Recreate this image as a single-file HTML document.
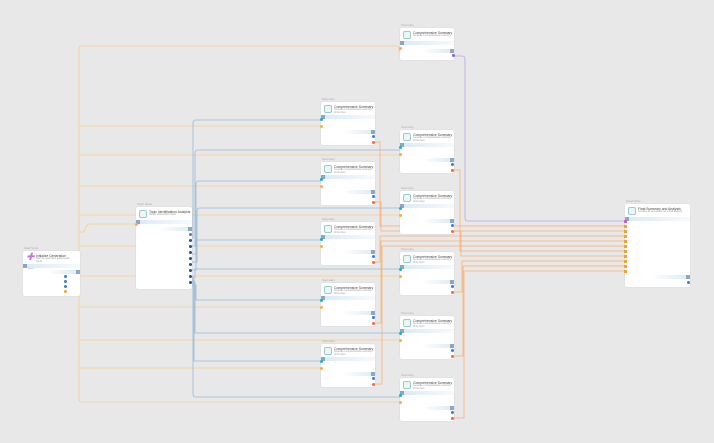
<!DOCTYPE html>
<html><head><meta charset="utf-8"><style>
*{margin:0;padding:0;box-sizing:border-box}
body{width:714px;height:443px;background:#e8e8e8;position:relative;overflow:hidden;font-family:"Liberation Sans",sans-serif}
svg{position:absolute;left:0;top:0}
.n{position:absolute;width:54px;height:43px;background:#fff;border-radius:2px;box-shadow:0 0 1px rgba(0,0,0,.15)}
.n .lb{position:absolute;left:1px;top:-5px;font-size:3px;color:#aaa;white-space:nowrap}
.n .ic{position:absolute;left:3px;top:3px;width:8px;height:8px;border:0.6px solid #9cc;border-radius:2px;background:#eef6f3}
.n b{position:absolute;left:13px;top:3px;font-size:3.4px;color:#444;font-weight:normal;white-space:nowrap}
.n p{position:absolute;left:13px;top:7px;width:38px;font-size:2.3px;line-height:2.6px;color:#999}
.n .in{position:absolute;left:0;top:13px;width:100%;height:4px;background:linear-gradient(90deg,#dbe9f5,#f6fafd)}
.n .in::before{content:"";position:absolute;left:0;top:0;width:4px;height:4px;background:#8aa8c4}
.n .out{position:absolute;right:0;height:4px;width:60%;background:linear-gradient(90deg,#fff,#dbe9f5)}
.n .out::after{content:"";position:absolute;right:0;top:0;width:4px;height:4px;background:#8aa8c4}
.d{position:absolute;width:3px;height:3px;border-radius:50%}
.t{position:absolute;font-size:2.2px;color:#aaa;white-space:nowrap}
</style></head><body>
<svg width="714" height="443" fill="none" stroke-width="0.8">
<g stroke="#f8cd8f">
<path d="M70 292 H76 Q79 292 79 288 V49 Q79 46 82 46 H396 Q399 46 399 49 V52 H400"/>
<path d="M79 280 V399 Q79 402 82 402 H400"/>
<path d="M79 126 H321"/><path d="M79 186 H321"/><path d="M79 246 H321"/><path d="M79 307 H321"/><path d="M79 368 H321"/>
<path d="M79 155 H400"/><path d="M79 215 H400"/><path d="M79 276 H400"/><path d="M79 340 H400"/>
<path d="M79 232 H84 Q86 224 90 224 H136"/>
</g>
<g stroke="#98b9d6">
<path d="M190 238 H193 V123 Q193 120 196 120 H321"/>
<path d="M190 246 H195 V153 Q195 150 198 150 H400"/>
<path d="M190 254 H196 V184 Q196 181 199 181 H321"/>
<path d="M190 262 H197 V211 Q197 208 200 208 H400"/>
<path d="M190 270 H196 V240 H321"/>
<path d="M190 278 H195 V269 H400"/>
<path d="M190 285 H196 V300 H321"/>
<path d="M190 282 H195 V333 H400"/>
<path d="M190 280 H194 V361 H321"/>
<path d="M190 276 H193 V394 Q193 397 196 397 H400"/>
</g>
<g stroke="#f5b077">
<path d="M375 142 H380 V226 H625"/>
<path d="M375 202 H381 V231 H625"/>
<path d="M375 262 H380 V236 H625"/>
<path d="M375 323 H381 V241 H625"/>
<path d="M375 384 H382 V246 H625"/>
<path d="M454 170 H460 V251 H625"/>
<path d="M454 231 H461 V256 H625"/>
<path d="M454 292 H462 V261 H625"/>
<path d="M454 356 H463 V266 H625"/>
<path d="M454 418 H464 V271 H625"/>
</g>
<path d="M455 56 H462 Q465 56 465 59 V218 Q465 221 468 221 H625" stroke="#bba3e6"/>
</svg>

<div class="n" style="left:23px;top:251px;width:57px;height:45px"><span class="lb">Start Node</span>
<i class="ic" style="border:none;background:none;color:#d070e0;font-size:10px;line-height:8px;text-align:center">✚</i><b>Initialize Generation</b><p>Start the generation process with inputs</p>
<s class="in"></s><span class="t" style="left:5px;top:17px">inputs</span>
<s class="out" style="top:19px"></s>
<u class="d" style="right:13px;top:24px;background:#3a7de0"></u><u class="d" style="right:13px;top:29px;background:#3a7de0"></u><u class="d" style="right:13px;top:34px;background:#3a7de0"></u><u class="d" style="right:13px;top:39px;background:#f5a030"></u></div>

<div class="n" style="left:136px;top:207px;width:56px;height:82px"><span class="lb">Topic Node</span>
<i class="ic"></i><b>Topic Identification Analysis</b><p>Identify and analyze topics</p>
<s class="in"></s><u class="d" style="left:-1px;top:16px;background:#f5b040"></u>
<s class="out" style="top:20px"></s>
<u class="d" style="right:0;top:26px;background:#3a7de0"></u>
<u class="d" style="right:0;top:32px;background:#1d4f9a"></u><u class="d" style="right:0;top:38px;background:#1d4f9a"></u><u class="d" style="right:0;top:44px;background:#1d4f9a"></u><u class="d" style="right:0;top:50px;background:#1d4f9a"></u><u class="d" style="right:0;top:56px;background:#1d4f9a"></u><u class="d" style="right:0;top:62px;background:#1d4f9a"></u><u class="d" style="right:0;top:68px;background:#1d4f9a"></u><u class="d" style="right:0;top:74px;background:#1d4f9a"></u></div>

<div class="n" style="left:400px;top:28px;height:32px"><span class="lb">Summary</span><i class="ic"></i><b>Comprehensive Summary</b><p>Generate a comprehensive summary</p><s class="in"></s><u class="d" style="left:-1px;top:19px;background:#f5b040"></u><s class="out" style="top:21px"></s><u class="d" style="right:-1px;top:26px;background:#8a5ee0"></u></div>

<div class="n" style="left:321px;top:102px"><span class="lb">Summary</span><i class="ic"></i><b>Comprehensive Summary</b><p>Generate a comprehensive summary of the input</p><s class="in"></s><u class="d" style="left:-1px;top:16px;background:#1ab0d8"></u><u class="d" style="left:-1px;top:23px;background:#f5b040"></u><s class="out" style="top:28px"></s><u class="d" style="right:0;top:33px;background:#3a7de0"></u><u class="d" style="right:0;top:39px;background:#ee6a40"></u></div>
<div class="n" style="left:321px;top:162px"><span class="lb">Summary</span><i class="ic"></i><b>Comprehensive Summary</b><p>Generate a comprehensive summary of the input</p><s class="in"></s><u class="d" style="left:-1px;top:16px;background:#1ab0d8"></u><u class="d" style="left:-1px;top:23px;background:#f5b040"></u><s class="out" style="top:28px"></s><u class="d" style="right:0;top:33px;background:#3a7de0"></u><u class="d" style="right:0;top:39px;background:#ee6a40"></u></div>
<div class="n" style="left:321px;top:222px"><span class="lb">Summary</span><i class="ic"></i><b>Comprehensive Summary</b><p>Generate a comprehensive summary of the input</p><s class="in"></s><u class="d" style="left:-1px;top:16px;background:#1ab0d8"></u><u class="d" style="left:-1px;top:23px;background:#f5b040"></u><s class="out" style="top:28px"></s><u class="d" style="right:0;top:33px;background:#3a7de0"></u><u class="d" style="right:0;top:39px;background:#ee6a40"></u></div>
<div class="n" style="left:321px;top:283px"><span class="lb">Summary</span><i class="ic"></i><b>Comprehensive Summary</b><p>Generate a comprehensive summary of the input</p><s class="in"></s><u class="d" style="left:-1px;top:16px;background:#1ab0d8"></u><u class="d" style="left:-1px;top:23px;background:#f5b040"></u><s class="out" style="top:28px"></s><u class="d" style="right:0;top:33px;background:#3a7de0"></u><u class="d" style="right:0;top:39px;background:#ee6a40"></u></div>
<div class="n" style="left:321px;top:344px"><span class="lb">Summary</span><i class="ic"></i><b>Comprehensive Summary</b><p>Generate a comprehensive summary of the input</p><s class="in"></s><u class="d" style="left:-1px;top:16px;background:#1ab0d8"></u><u class="d" style="left:-1px;top:23px;background:#f5b040"></u><s class="out" style="top:28px"></s><u class="d" style="right:0;top:33px;background:#3a7de0"></u><u class="d" style="right:0;top:39px;background:#ee6a40"></u></div>

<div class="n" style="left:400px;top:130px"><span class="lb">Summary</span><i class="ic"></i><b>Comprehensive Summary</b><p>Generate a comprehensive summary of the input</p><s class="in"></s><u class="d" style="left:-1px;top:16px;background:#1ab0d8"></u><u class="d" style="left:-1px;top:23px;background:#f5b040"></u><s class="out" style="top:28px"></s><u class="d" style="right:0;top:33px;background:#3a7de0"></u><u class="d" style="right:0;top:39px;background:#ee6a40"></u></div>
<div class="n" style="left:400px;top:191px"><span class="lb">Summary</span><i class="ic"></i><b>Comprehensive Summary</b><p>Generate a comprehensive summary of the input</p><s class="in"></s><u class="d" style="left:-1px;top:16px;background:#1ab0d8"></u><u class="d" style="left:-1px;top:23px;background:#f5b040"></u><s class="out" style="top:28px"></s><u class="d" style="right:0;top:33px;background:#3a7de0"></u><u class="d" style="right:0;top:39px;background:#ee6a40"></u></div>
<div class="n" style="left:400px;top:252px"><span class="lb">Summary</span><i class="ic"></i><b>Comprehensive Summary</b><p>Generate a comprehensive summary of the input</p><s class="in"></s><u class="d" style="left:-1px;top:16px;background:#1ab0d8"></u><u class="d" style="left:-1px;top:23px;background:#f5b040"></u><s class="out" style="top:28px"></s><u class="d" style="right:0;top:33px;background:#3a7de0"></u><u class="d" style="right:0;top:39px;background:#ee6a40"></u></div>
<div class="n" style="left:400px;top:316px"><span class="lb">Summary</span><i class="ic"></i><b>Comprehensive Summary</b><p>Generate a comprehensive summary of the input</p><s class="in"></s><u class="d" style="left:-1px;top:16px;background:#1ab0d8"></u><u class="d" style="left:-1px;top:23px;background:#f5b040"></u><s class="out" style="top:28px"></s><u class="d" style="right:0;top:33px;background:#3a7de0"></u><u class="d" style="right:0;top:39px;background:#ee6a40"></u></div>
<div class="n" style="left:400px;top:378px"><span class="lb">Summary</span><i class="ic"></i><b>Comprehensive Summary</b><p>Generate a comprehensive summary of the input</p><s class="in"></s><u class="d" style="left:-1px;top:16px;background:#1ab0d8"></u><u class="d" style="left:-1px;top:23px;background:#f5b040"></u><s class="out" style="top:28px"></s><u class="d" style="right:0;top:33px;background:#3a7de0"></u><u class="d" style="right:0;top:39px;background:#ee6a40"></u></div>

<div class="n" style="left:625px;top:204px;width:65px;height:83px"><span class="lb">Final Node</span><i class="ic"></i><b>Final Summary and Analysis</b><p style="width:48px">Combine all summaries into a final analysis</p><s class="in"></s>
<u class="d" style="left:-1px;top:16px;background:#c060e0;border-radius:0"></u>
<u class="d" style="left:-1px;top:21px;background:#f5a030;border-radius:0"></u><u class="d" style="left:-1px;top:26px;background:#f5a030;border-radius:0"></u><u class="d" style="left:-1px;top:31px;background:#f5a030;border-radius:0"></u><u class="d" style="left:-1px;top:36px;background:#f5a030;border-radius:0"></u><u class="d" style="left:-1px;top:41px;background:#f5a030;border-radius:0"></u><u class="d" style="left:-1px;top:46px;background:#f5a030;border-radius:0"></u><u class="d" style="left:-1px;top:51px;background:#f5a030;border-radius:0"></u><u class="d" style="left:-1px;top:56px;background:#f5a030;border-radius:0"></u><u class="d" style="left:-1px;top:61px;background:#f5a030;border-radius:0"></u><u class="d" style="left:-1px;top:66px;background:#f5a030;border-radius:0"></u>
<s class="out" style="top:71px"></s><u class="d" style="right:0;top:77px;background:#3a7de0"></u></div>
</body></html>
